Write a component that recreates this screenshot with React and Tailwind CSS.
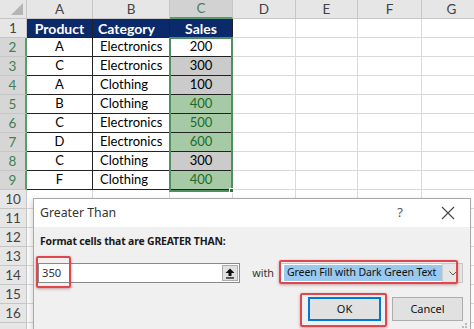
import React from "react";

const cols = ["A", "B", "C", "D", "E", "F", "G"];

const data = [
  ["A", "Electronics", 200],
  ["C", "Electronics", 300],
  ["A", "Clothing", 100],
  ["B", "Clothing", 400],
  ["C", "Electronics", 500],
  ["D", "Electronics", 600],
  ["C", "Clothing", 300],
  ["F", "Clothing", 400],
];

const RedBox = ({ className }) => (
  <div
    className={
      "absolute border-2 border-[#e0464c] rounded-[2px] shadow-[0_1px_3px_rgba(120,0,0,0.35)] pointer-events-none " +
      className
    }
  />
);

const Dialog = () => (
  <div className="absolute left-[33px] top-[198px] w-[438px] h-[133px] bg-[#f0f0f0] border border-[#a9a9a9] shadow-[-2px_2px_6px_rgba(0,0,0,0.15)] font-['Noto_Sans',sans-serif] text-[#1a1a1a]">
    <div className="h-[28px] bg-white flex items-center pl-[6px]">
      <span className="text-[12.3px] text-[#333]">Greater Than</span>
      <span className="ml-auto text-[13px] text-[#555] mr-[38px]">?</span>
      <svg width="14" height="14" viewBox="0 0 14 14" className="mr-[15px]">
        <path d="M1 1 L13 13 M13 1 L1 13" stroke="#444" strokeWidth="1.1" />
      </svg>
    </div>
    <div className="pl-[6px] pr-[7px] pt-[6px]">
      <div className="text-[10.4px] font-bold leading-[16px] tracking-[-0.15px]">
        Format cells that are GREATER THAN:
      </div>
      <div className="flex items-center mt-[14px] -ml-[2px]">
        <div className="w-[207px] h-[20px] bg-white border border-[#8a8a8a] flex items-center">
          <span className="text-[11.2px] pl-[3px] text-[#333]">350</span>
          <div className="ml-auto mr-[1px] w-[16px] h-[16px] bg-[#e1e1e1] border border-[#adadad] flex items-center justify-center">
            <svg width="10" height="11" viewBox="0 0 10 11">
              <path d="M5 0.5 L9.5 5 L6.5 5 L6.5 8 L3.5 8 L3.5 5 L0.5 5 Z" fill="#111" />
              <rect x="1" y="9.3" width="8" height="1.3" fill="#111" />
            </svg>
          </div>
        </div>
        <span className="ml-[12px] text-[10.8px] text-[#333]">with</span>
        <div className="ml-[6px] w-[184px] h-[20px] bg-white border border-[#c8c8c8] flex items-center">
          <div className="ml-[3px] w-[158px] h-[16px] bg-[#99c9ef] flex items-center pl-[3px] overflow-hidden">
            <span className="text-[10.5px] tracking-[-0.1px] whitespace-nowrap text-[#111]">Green Fill with Dark Green Text</span>
          </div>
          <div className="ml-auto w-[20px] h-full bg-[#e6e6e6] border-l border-[#d0d0d0] flex items-center justify-center">
            <svg width="8" height="5" viewBox="0 0 8 5">
              <path d="M0.5 0.5 L4 4 L7.5 0.5" stroke="#555" fill="none" strokeWidth="1" />
            </svg>
          </div>
        </div>
      </div>
      <div className="flex justify-end gap-[11px] mt-[14px]">
        <button className="w-[73px] h-[24px] bg-[#e1e1e1] border-2 border-[#0078d7] text-[11px] text-[#111]">
          OK
        </button>
        <button className="w-[71px] h-[24px] bg-[#e1e1e1] border border-[#adadad] text-[11px] text-[#111]">
          Cancel
        </button>
      </div>
    </div>
    <RedBox className="left-[2px] top-[57px] w-[35px] h-[32px]" />
    <RedBox className="left-[245px] top-[61px] w-[179px] h-[24px]" />
    <RedBox className="left-[266px] top-[94px] w-[87px] h-[34px]" />
    <div className="absolute right-[3px] bottom-[2px] flex flex-col items-end gap-[1px]">
      <div className="w-[2px] h-[2px] bg-[#bbb]" />
      <div className="flex gap-[1px]">
        <div className="w-[2px] h-[2px] bg-[#bbb]" />
        <div className="w-[2px] h-[2px] bg-[#bbb]" />
      </div>
    </div>
  </div>
);

export default function App() {
  const headerCell = "h-[19px] bg-[#e6e6e6] border-r border-b border-[#c6c6c6] flex items-center justify-center text-[13.5px] text-[#444]";
  const plain = "h-[19px] bg-white border-r border-b border-[#dadada]";
  const table = "h-[19px] border-r border-b border-[#222] flex items-center text-[13px] whitespace-nowrap";

  const rows = [];
  for (let r = 1; r <= 17; r++) {
    const sel = r >= 2 && r <= 9;
    rows.push(
      <div
        key={"h" + r}
        className={
          "h-[19px] border-b flex items-center justify-center text-[13.5px] " +
          (sel
            ? "bg-[#d6d6d6] border-r-2 border-r-[#5a9a6a] border-b-[#c6c6c6] text-[#3f7f52]"
            : "bg-[#e6e6e6] border-r border-[#c6c6c6] text-[#444]")
        }
      >
        {r < 17 ? r : ""}
      </div>
    );
    if (r === 1) {
      rows.push(
        <div key="1a" className={table + " bg-[#0b2a6b] text-white font-bold justify-center text-[14px]"}>Product</div>,
        <div key="1b" className={table + " bg-[#0b2a6b] text-white font-bold pl-[5px] text-[14px]"}>Category</div>,
        <div key="1c" className={table + " bg-[#0b2a6b] text-white font-bold justify-center text-[14px]"}>Sales</div>
      );
    } else if (sel) {
      const [p, c, s] = data[r - 2];
      const fill = s === 200 ? "bg-white text-black" : s > 350 ? "bg-[#a6c9a6] text-[#1f6b26]" : "bg-[#cbcbcb] text-black";
      rows.push(
        <div key={r + "a"} className={table + " bg-white justify-center text-black"}>{p}</div>,
        <div key={r + "b"} className={table + " bg-white pl-[7px] text-black"}>{c}</div>,
        <div key={r + "c"} className={table + " justify-center " + fill}>{s}</div>
      );
    } else {
      rows.push(
        <div key={r + "a"} className={plain} />,
        <div key={r + "b"} className={plain} />,
        <div key={r + "c"} className={plain} />
      );
    }
    ["d", "e", "f", "g"].forEach((k) => rows.push(<div key={r + k} className={plain} />));
  }

  return (
    <div className="relative w-[474px] h-[329px] overflow-hidden bg-white font-['Lato',sans-serif]">
      <div className="grid grid-cols-[27px_66px_77px_63px_63px_62px_64px_60px]">
        <div className={headerCell + " items-end justify-end"}>
          <svg width="14" height="14" viewBox="0 0 14 14" className="mr-[2px] mb-[2px]">
            <path d="M13 1 L13 13 L1 13 Z" fill="#b5b5b5" />
          </svg>
        </div>
        {cols.map((c) => (
          <div
            key={c}
            className={
              c === "C"
                ? "h-[19px] bg-[#d2d2d2] border-r border-[#c6c6c6] border-b-2 border-b-[#5a9a6a] flex items-center justify-center text-[13.5px] text-[#4a7f5a]"
                : headerCell
            }
          >
            {c}
          </div>
        ))}
        {rows}
      </div>
      {/* selection C2:C9 */}
      <div className="absolute left-[169px] top-[37px] w-[64px] h-[155px] border-2 border-[#4f8f60] pointer-events-none" />
      <div className="absolute left-[229px] top-[188px] w-[5px] h-[5px] bg-[#2f6f40] border border-white" />
      <Dialog />
    </div>
  );
}
